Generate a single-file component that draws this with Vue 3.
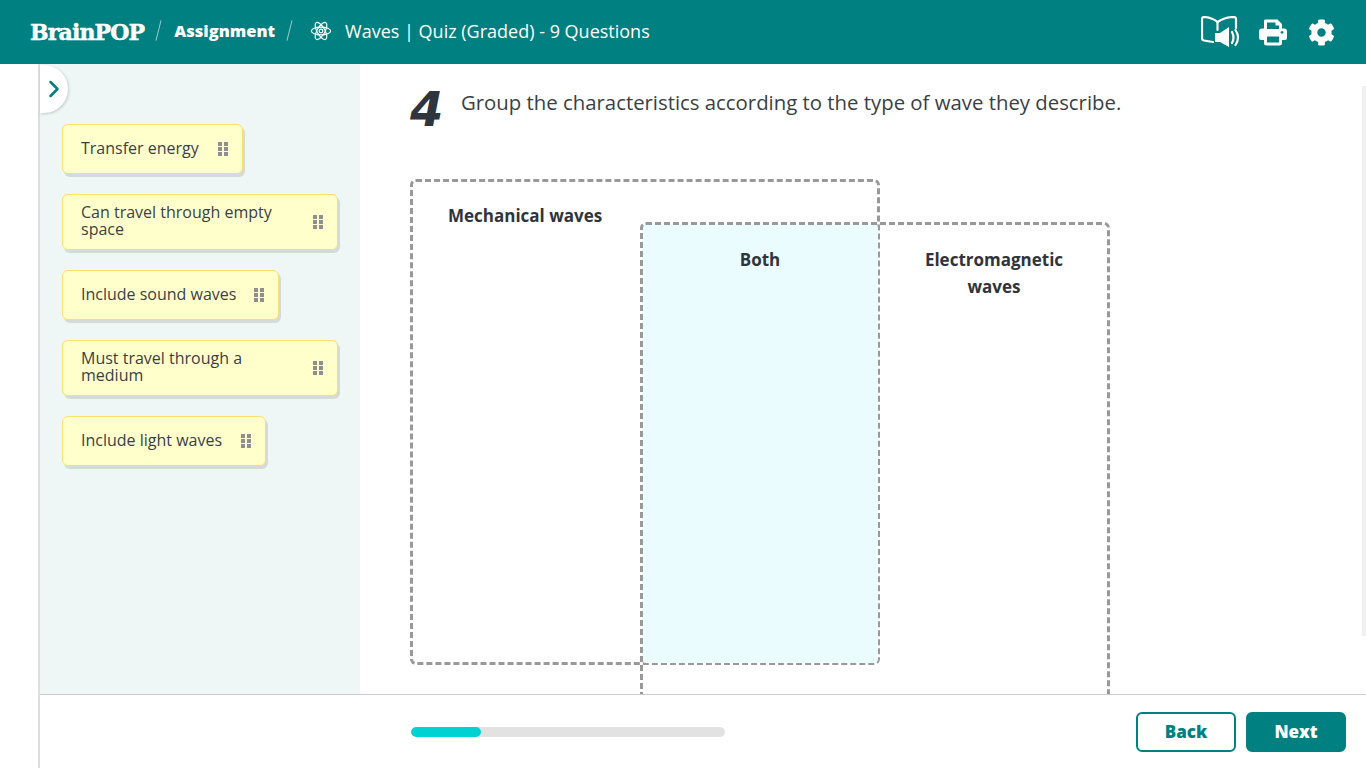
<script setup>
const chips = [
  { text: 'Transfer energy', cls: 'w1' },
  { text: 'Can travel through empty space', cls: 'w2' },
  { text: 'Include sound waves', cls: 'w3' },
  { text: 'Must travel through a medium', cls: 'w2' },
  { text: 'Include light waves', cls: 'w5' },
]
</script>

<template>
  <div class="app">
    <header class="top">
      <div class="crumbs">
        <span class="logo">BrainPOP</span>
        <span class="slash"></span>
        <span class="assign">Assignment</span>
        <span class="slash"></span>
        <svg class="atom" viewBox="0 0 24 24" fill="none" stroke="#fff" stroke-width="1.3">
          <ellipse cx="12" cy="12" rx="10.5" ry="4.2" />
          <ellipse cx="12" cy="12" rx="10.5" ry="4.2" transform="rotate(60 12 12)" />
          <ellipse cx="12" cy="12" rx="10.5" ry="4.2" transform="rotate(120 12 12)" />
          <circle cx="12" cy="12" r="2" />
        </svg>
        <span class="title">Waves | Quiz (Graded) - 9 Questions</span>
      </div>
      <div class="tools">
        <svg class="ic-book" viewBox="0 0 40 32" fill="none">
          <path d="M12 26 L3 24.5 Q1 24 1 22 V3 Q1 1 3 1 Q11 1.5 16.5 6 Q23 1.5 32 1 Q35 1 35 3 V12" stroke="#fff" stroke-width="2.2" stroke-linecap="round" stroke-linejoin="round" />
          <path d="M16.5 6 V14" stroke="#fff" stroke-width="2.2" stroke-linecap="round" />
          <path d="M14 17 H19 L28 11 V31 L19 26 H14 Z" fill="#fff" />
          <path d="M31 16 Q34 21.5 31 27 M34.5 14 Q39.5 21.5 34.5 29" stroke="#fff" stroke-width="2.2" stroke-linecap="round" />
        </svg>
        <svg class="ic-print" viewBox="0 0 28 28">
          <path fill="#fff" fill-rule="evenodd" d="M6 1.5 H18.5 L23 6 V10.5 H25 Q28 10.5 28 13.5 V20 Q28 22 26 22 H23 V25 Q23 27.5 20.5 27.5 H7.5 Q5 27.5 5 25 V22 H2 Q0 22 0 20 V13.5 Q0 10.5 3 10.5 H5 V3 Q5 1.5 6 1.5 Z M8 4.5 V11 H20 V7.5 H16.5 V4.5 Z M8 18.5 V24.5 H20 V18.5 Z M23 13 A1.4 1.4 0 1 0 23.01 13 Z" />
        </svg>
        <svg class="ic-gear" viewBox="0 0 512 512">
          <path fill="#fff" d="M487.4 315.7l-42.6-24.6c4.3-23.2 4.3-47 0-70.2l42.6-24.6c4.9-2.8 7.1-8.6 5.5-14-11.1-35.6-30-67.8-54.7-94.6-3.8-4.1-10-5.1-14.8-2.3L380.8 110c-17.9-15.4-38.5-27.3-60.8-35.1V25.8c0-5.6-3.9-10.5-9.4-11.7-36.7-8.2-74.3-7.8-109.2 0-5.5 1.2-9.4 6.1-9.4 11.7V75c-22.2 7.9-42.8 19.8-60.8 35.1L88.7 85.5c-4.9-2.8-11-1.9-14.8 2.3-24.7 26.7-43.6 58.9-54.7 94.6-1.7 5.4.6 11.2 5.5 14L67.3 221c-4.3 23.2-4.3 47 0 70.2l-42.6 24.6c-4.9 2.8-7.1 8.6-5.5 14 11.1 35.6 30 67.8 54.7 94.6 3.8 4.1 10 5.1 14.8 2.3l42.6-24.6c17.9 15.4 38.5 27.3 60.8 35.1v49.2c0 5.6 3.9 10.5 9.4 11.7 36.7 8.2 74.3 7.8 109.2 0 5.5-1.2 9.4-6.1 9.4-11.7v-49.2c22.2-7.9 42.8-19.8 60.8-35.1l42.6 24.6c4.9 2.8 11 1.9 14.8-2.3 24.7-26.7 43.6-58.9 54.7-94.6 1.5-5.5-.7-11.3-5.6-14.1zM256 336c-44.1 0-80-35.9-80-80s35.9-80 80-80 80 35.9 80 80-35.9 80-80 80z" />
        </svg>
      </div>
    </header>

    <div class="body">
      <div class="rail">
        <button class="toggle">
          <svg viewBox="0 0 12 18" width="12" height="18" fill="none" stroke="#008080" stroke-width="2.5" stroke-linecap="round" stroke-linejoin="round">
            <path d="M2.5 2 L9.5 9 L2.5 16" />
          </svg>
        </button>
      </div>
      <div class="content">
        <div class="work">
          <aside class="side">
            <div v-for="c in chips" :key="c.text" class="chip" :class="c.cls">
              <span class="chip-text">{{ c.text }}</span>
              <span class="grip"><i v-for="n in 6" :key="n"></i></span>
            </div>
          </aside>
          <main class="main">
            <div class="question">
              <span class="num">4</span>
              <p class="q">Group the characteristics according to the type of wave they describe.</p>
            </div>
            <div class="venn">
              <div class="set left"><span class="lbl lbl-l">Mechanical waves</span></div>
              <div class="overlap"><span class="lbl">Both</span></div>
              <div class="set right"><span class="lbl lbl-r">Electromagnetic waves</span></div>
            </div>
            <div class="scroll"></div>
          </main>
        </div>
        <footer class="foot">
          <div class="bar"><div class="fill"></div></div>
          <div class="btns">
            <button class="btn back">Back</button>
            <button class="btn next">Next</button>
          </div>
        </footer>
      </div>
    </div>
  </div>
</template>

<style>
html, body { margin: 0; background: #fff; }
</style>

<style scoped>
.app {
  width: 1366px; height: 768px; display: flex; flex-direction: column; overflow: hidden;
  font-family: "Open Sans", "Lato", sans-serif; color: #30343c;
}
.top {
  height: 64px; flex: none; background: #008080; display: flex; align-items: center;
  justify-content: space-between; padding: 0 31px 0 30px; color: #fff;
}
.crumbs { display: flex; align-items: center; margin-top: -3px; }
.logo { font: 700 22px "DejaVu Serif", serif; letter-spacing: -0.85px; -webkit-text-stroke: 0.5px #fff; margin-top: 3px; }
.slash { width: 1px; height: 21px; background: #9cc9c9; transform: rotate(14deg); margin: 0 15px 0 14px; }
.assign { font-weight: 800; font-size: 16.5px; }
.atom { width: 22px; height: 22px; margin: 0 13px 0 5px; }
.title { font-size: 18px; }
.tools { display: flex; align-items: center; }
.ic-book { width: 40px; height: 32px; margin-right: 18px; }
.ic-print { width: 28px; height: 28px; margin-right: 21px; }
.ic-gear { width: 27px; height: 27px; }

.body { flex: 1; display: flex; min-height: 0; }
.rail { width: 38px; flex: none; border-right: 2px solid #ddd; position: relative; }
.toggle {
  position: absolute; left: 40px; top: 1px; width: 28px; height: 48px; padding: 0; border: 0;
  background: #fff; border-radius: 0 24px 24px 0; box-shadow: 1px 1px 3px rgba(0,0,0,.18);
  display: flex; align-items: center; justify-content: center; z-index: 2;
}
.content { flex: 1; display: flex; flex-direction: column; min-width: 0; }
.work { flex: 1; display: flex; min-height: 0; }
.side {
  width: 320px; flex: none; background: #eef6f6; box-sizing: border-box; padding: 60px 0 0 22px;
  display: flex; flex-direction: column; gap: 20px; align-items: flex-start;
}
.chip {
  box-sizing: border-box; display: flex; align-items: center; justify-content: space-between;
  min-height: 50px; padding: 10px 14px 10px 18px; background: #ffffcc; border: 1px solid #fde068;
  border-radius: 6px; box-shadow: 2px 3px 0 #d5dbd8; font-size: 16px; line-height: 17px; color: #3a3f46;
}
.w2 { padding-top: 11px; padding-bottom: 11px; }
.w1 { width: 181px; } .w2 { width: 276px; } .w3 { width: 217px; } .w5 { width: 204px; }
.chip-text { flex: 1; padding-right: 30px; margin-top: -2px; }
.w1 .chip-text, .w3 .chip-text, .w5 .chip-text { padding-right: 0; white-space: nowrap; }
.grip { display: grid; grid-template-columns: 4px 4px; grid-auto-rows: 4px; gap: 1px 2px; flex: none; }
.grip i { background: #8f8f8f; display: block; }

.main { flex: 1; position: relative; overflow: hidden; }
.question { display: flex; padding: 16px 0 0 50px; align-items: flex-start; }
.num { font: italic 700 48px/50px "DejaVu Sans", sans-serif; color: #30343c; width: 51px; flex: none; margin-top: 4px; }
.q { margin: 7px 0 0; font-size: 20.35px; line-height: 30px; color: #3a3f46; white-space: nowrap; }
.venn { position: absolute; left: 0; top: 0; width: 100%; height: 100%; }
.set, .overlap { position: absolute; box-sizing: border-box; border-radius: 6px; }
.set { width: 470px; border: 3px dashed #999; }
.left { left: 50px; top: 115px; height: 486px; }
.right { left: 280px; top: 158px; height: 520px; }
.overlap { left: 282px; top: 160px; width: 236px; height: 439px; background: #eafcfd; border-radius: 4px; }
.lbl { position: absolute; font-weight: 700; font-size: 17px; line-height: 27px; color: #30343c; text-align: center; }
.lbl-l { left: 35px; top: 20px; white-space: nowrap; }
.overlap .lbl { left: 0; right: 0; top: 22px; }
.lbl-r { left: 236px; width: 230px; top: 21px; padding: 0 30px; box-sizing: border-box; }
.scroll { position: absolute; right: 0; top: 22px; width: 4px; height: 550px; background: #f0f0f0; }

.foot {
  height: 74px; flex: none; box-sizing: border-box; border-top: 1px solid #ccc; background: #fff;
  display: flex; align-items: center; justify-content: space-between; padding: 0 20px 0 371px; position: relative;
}
.bar { width: 314px; height: 10px; border-radius: 5px; background: #e2e2e2; overflow: hidden; }
.fill { width: 70px; height: 100%; background: #00d2d3; border-radius: 5px; }
.btns { display: flex; gap: 10px; }
.btn {
  width: 100px; height: 40px; box-sizing: border-box; border-radius: 6px; border: 2px solid #008080;
  font: 800 17px "Open Sans", sans-serif;
}
.back { background: #fff; color: #008080; }
.next { background: #008080; color: #fff; }
</style>
